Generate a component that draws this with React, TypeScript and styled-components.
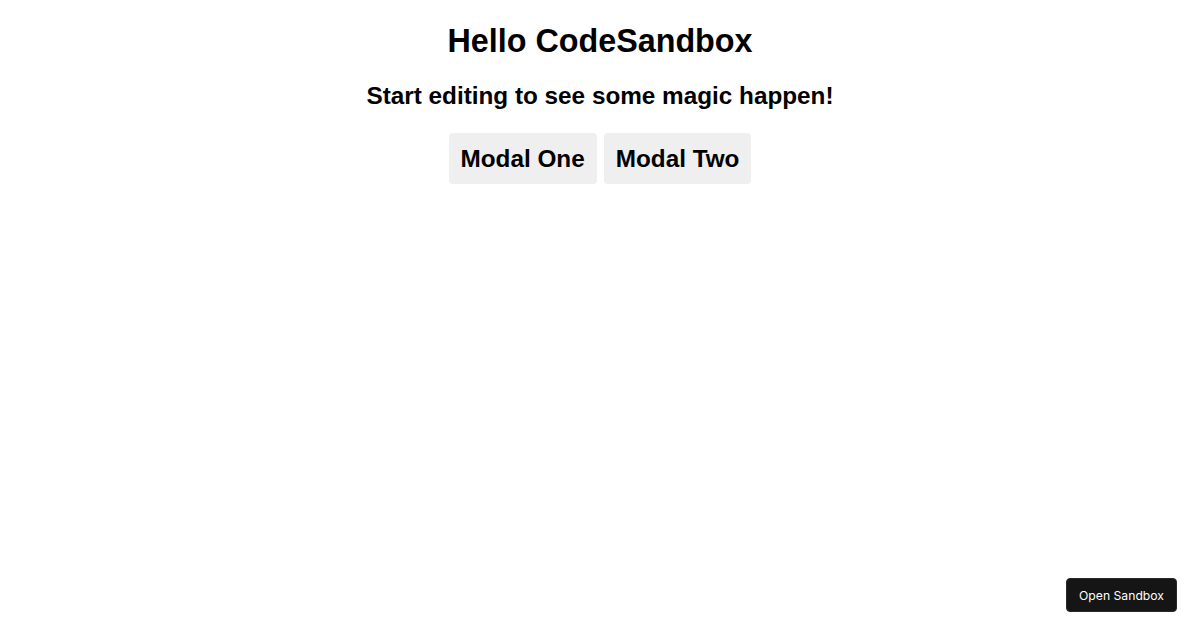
import React from "react";
import styled, { createGlobalStyle } from "styled-components";

const GlobalStyle = createGlobalStyle`
  body {
    margin: 8px;
    background: #ffffff;
    font-family: "Liberation Sans", Arial, sans-serif;
    color: #000000;
  }
`;

const Page = styled.div`
  text-align: center;
`;

const Title = styled.h1`
  font-size: 32.3px;
  font-weight: bold;
  margin: 14.5px 0 22.4px;
`;

const Subtitle = styled.h2`
  font-size: 24.3px;
  font-weight: bold;
  margin: 0;
`;

const ButtonRow = styled.div`
  display: flex;
  justify-content: center;
  gap: 7px;
  margin-top: 23px;
`;

const ModalButton = styled.button`
  font-family: "Liberation Sans", Arial, sans-serif;
  font-size: 24.3px;
  font-weight: bold;
  color: #000000;
  background: #efefef;
  border: none;
  border-radius: 4px;
  padding: 12px 12px;
  line-height: 27px;
  cursor: pointer;
`;

const SandboxLink = styled.a`
  position: fixed;
  right: 23px;
  bottom: 18px;
  display: flex;
  align-items: center;
  justify-content: center;
  width: 111px;
  height: 34px;
  box-sizing: border-box;
  background: #151515;
  color: #ffffff;
  border: 1px solid #2a2a2a;
  border-radius: 4px;
  font-family: Inter, "Noto Sans", sans-serif;
  font-size: 12.2px;
  text-decoration: none;
`;

export default function App() {
  return (
    <>
      <GlobalStyle />
      <Page>
        <Title>Hello CodeSandbox</Title>
        <Subtitle>Start editing to see some magic happen!</Subtitle>
        <ButtonRow>
          <ModalButton>Modal One</ModalButton>
          <ModalButton>Modal Two</ModalButton>
        </ButtonRow>
      </Page>
      <SandboxLink href="#">Open Sandbox</SandboxLink>
    </>
  );
}
